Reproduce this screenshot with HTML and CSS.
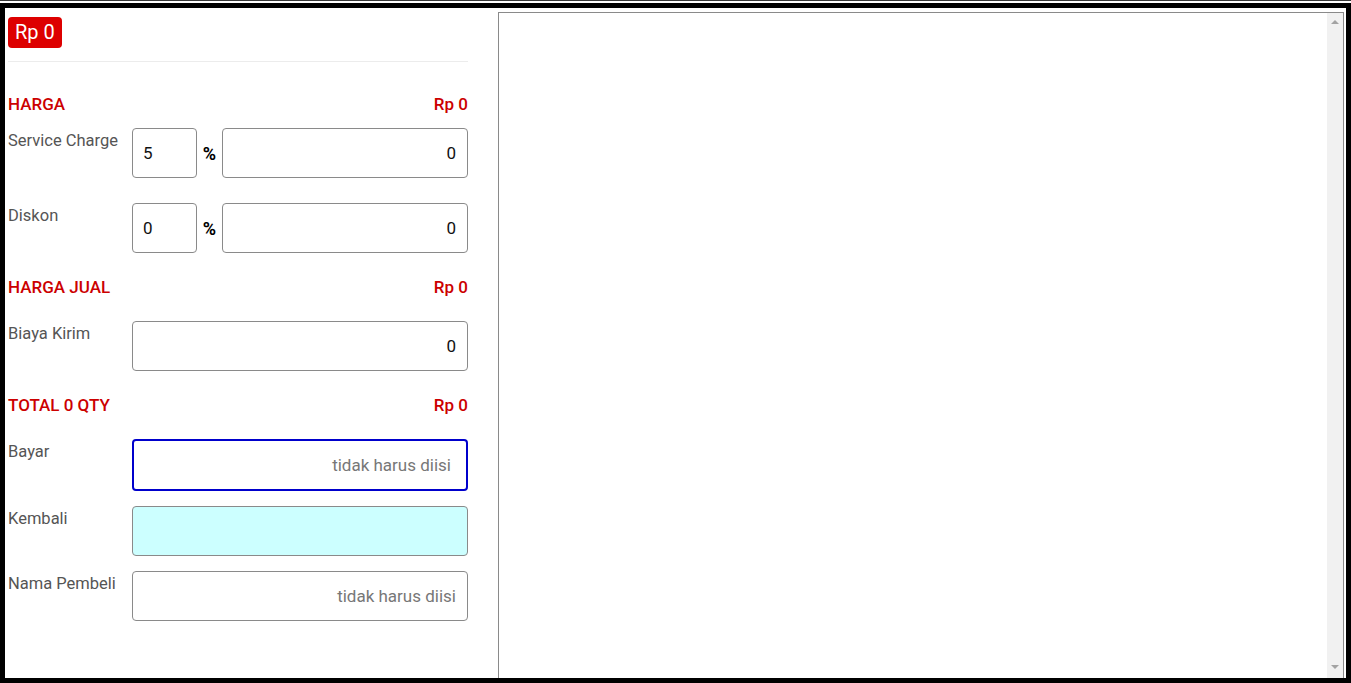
FILE: index.html
```html
<!DOCTYPE html>
<html lang="id">
<head>
<meta charset="utf-8">
<title>Kasir</title>
<link rel="stylesheet" href="styles.css">
</head>
<body>
<div class="topline"></div>
<div class="frame">
  <div class="panel">
    <div class="badge">Rp 0</div>
    <div class="rule"></div>

    <div class="heading first"><span>HARGA</span><span>Rp 0</span></div>
    <div class="row gap-lg">
      <label class="lbl">Service Charge</label>
      <div class="ctrl split">
        <input class="inp small" type="text" value="5">
        <span class="pct">%</span>
        <input class="inp right" type="text" value="0">
      </div>
    </div>
    <div class="row">
      <label class="lbl">Diskon</label>
      <div class="ctrl split">
        <input class="inp small" type="text" value="0">
        <span class="pct">%</span>
        <input class="inp right" type="text" value="0">
      </div>
    </div>

    <div class="heading"><span>HARGA JUAL</span><span>Rp 0</span></div>
    <div class="row">
      <label class="lbl">Biaya Kirim</label>
      <div class="ctrl"><input class="inp right" type="text" value="0"></div>
    </div>

    <div class="heading"><span>TOTAL 0 QTY</span><span>Rp 0</span></div>
    <div class="row gap-sm">
      <label class="lbl">Bayar</label>
      <div class="ctrl"><input class="inp right focus" type="text" placeholder="tidak harus diisi"></div>
    </div>
    <div class="row gap-sm">
      <label class="lbl">Kembali</label>
      <div class="ctrl"><input class="inp right cyan" type="text" readonly></div>
    </div>
    <div class="row">
      <label class="lbl">Nama Pembeli</label>
      <div class="ctrl"><input class="inp right" type="text" placeholder="tidak harus diisi"></div>
    </div>
  </div>

  <div class="viewer">
    <div class="viewer-body"></div>
    <div class="scrollbar">
      <span class="arrow up"></span>
      <span class="arrow down"></span>
    </div>
  </div>
</div>
</body>
</html>
```

FILE: styles.css
```css
* { box-sizing: border-box; }

html, body {
  margin: 0;
  padding: 0;
  background: #fff;
}

body {
  font-family: Roboto, "Liberation Sans", Arial, sans-serif;
  font-size: 16px;
  color: #222;
  width: 1351px;
  height: 683px;
  overflow: hidden;
}

.topline {
  height: 1px;
  background: #3a3a3a;
  margin-bottom: 2px;
}

.frame {
  height: 680px;
  border: 5px solid #000;
  display: flex;
  align-items: flex-start;
}

.panel {
  width: 460px;
  margin-left: 3px;
  padding-top: 9px;
  flex: none;
  display: flex;
  flex-direction: column;
}

.badge {
  align-self: flex-start;
  background: #dd0000;
  color: #fff;
  font-size: 20px;
  line-height: 31px;
  height: 31px;
  padding: 0 7px;
  border-radius: 4px;
}

.rule {
  height: 1px;
  background: #ececec;
  margin-top: 13px;
}

.heading {
  display: flex;
  justify-content: space-between;
  color: #cc0000;
  font-weight: 500;
  font-size: 17px;
  line-height: 20px;
  margin: 24px 0;
}

.heading.first {
  margin-top: 32px;
  margin-bottom: 14px;
}

.row {
  display: flex;
  align-items: flex-start;
}

.row.gap-lg { margin-bottom: 25px; }
.row.gap-sm { margin-bottom: 15px; }

.lbl {
  width: 124px;
  flex: none;
  color: #555;
  font-size: 16.5px;
  line-height: 22px;
  padding-top: 2px;
}

.ctrl {
  flex: 1;
  display: flex;
  align-items: center;
}

.pct {
  width: 25px;
  text-align: center;
  font-weight: 700;
  color: #000;
  font-size: 18px;
}

.inp {
  height: 50px;
  width: 100%;
  flex: 1;
  min-width: 0;
  border: 1px solid #8a8a8a;
  border-radius: 4px;
  background: #fff;
  font-family: Roboto, "Liberation Sans", Arial, sans-serif;
  font-size: 17px;
  color: #111;
  padding: 0 11px 0 10px;
  outline: none;
}

.inp.small {
  flex: none;
  width: 65px;
}

.inp.right { text-align: right; }

.inp::placeholder { color: #777; }

.inp.focus {
  height: 52px;
  border: 2px solid #0000cc;
  padding-right: 15px;
}

.inp.cyan {
  background: #ccffff;
}

.viewer {
  flex: 1;
  margin: 4px 2px 0 30px;
  height: 666px;
  border: 1px solid #8a8a8a;
  border-bottom: 0;
  display: flex;
}

.viewer-body {
  flex: 1;
}

.scrollbar {
  width: 16px;
  background: #f1f1f1;
  position: relative;
}

.arrow {
  position: absolute;
  left: 4px;
  width: 0;
  height: 0;
  border-left: 4px solid transparent;
  border-right: 4px solid transparent;
}

.arrow.up {
  top: 7px;
  border-bottom: 4px solid #a3a3a3;
}

.arrow.down {
  bottom: 9px;
  border-top: 4px solid #a3a3a3;
}
```
